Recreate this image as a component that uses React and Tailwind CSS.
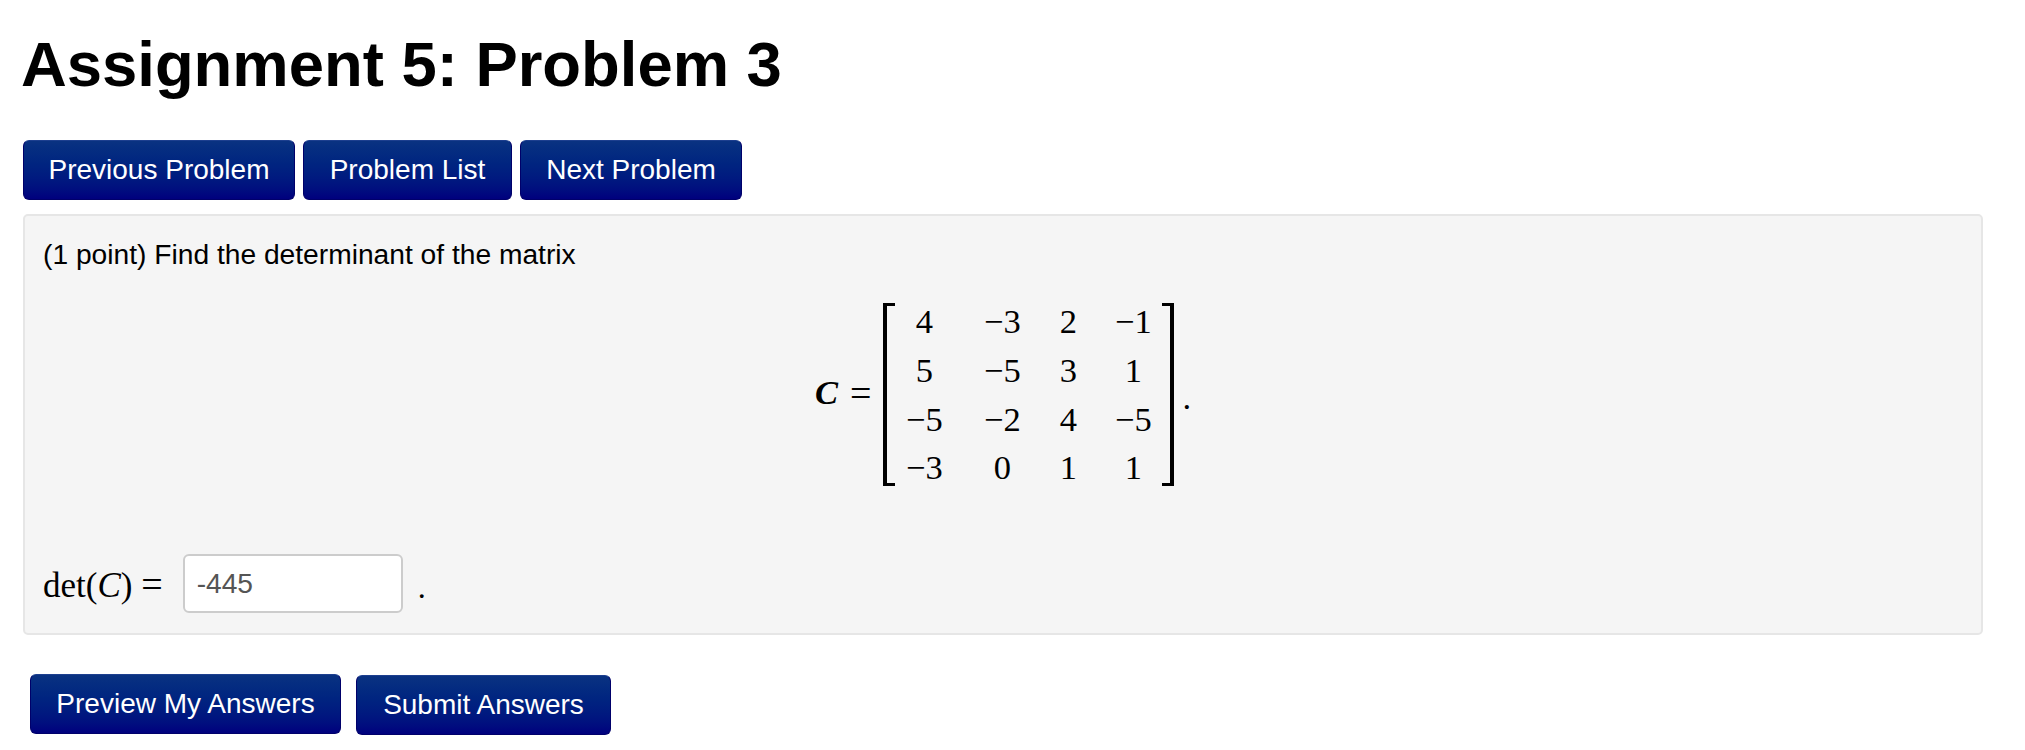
const rows = [
  ['4', '−3', '2', '−1'],
  ['5', '−5', '3', '1'],
  ['−5', '−2', '4', '−5'],
  ['−3', '0', '1', '1'],
];

const NavButton = ({ children, className = '' }) => (
  <button className={`h-[60px] rounded-[6px] border border-[#00006a] border-t-[#1d3f8f] bg-linear-to-b from-[#0a3281] to-[#00007e] text-[28px] leading-none text-white ${className}`}>
    {children}
  </button>
);

const Bracket = ({ side }) => (
  <div className={`h-[183px] w-[12px] border-y-[3px] border-black ${side === 'left' ? 'border-l-[4px]' : 'border-r-[4px]'}`} />
);

export default function App() {
  return (
    <div className="h-[750px] w-full overflow-hidden bg-white font-['Liberation_Sans',Arial,sans-serif] text-black">
      <div className="pl-[23px] pr-[33px] pt-[26px]">
        <h1 className="-ml-[2px] h-[88px] text-[63.4px] font-bold leading-[76px]">Assignment 5: Problem 3</h1>

        <div className="mt-[26px] flex gap-[8px]">
          <NavButton className="w-[272px]">Previous Problem</NavButton>
          <NavButton className="w-[209px]">Problem List</NavButton>
          <NavButton className="w-[222px]">Next Problem</NavButton>
        </div>

        <div className="mr-[9px] mt-[14px] h-[421px] rounded-[5px] border-2 border-[#e6e6e6] bg-[#f5f5f5] px-[18px] pt-[20px]">
          <p className="text-[28.2px] leading-[36px]">(1 point) Find the determinant of the matrix</p>

          <div className="mt-[25px] flex h-[195px] items-center justify-center pr-0 font-['Liberation_Serif','Times_New_Roman',serif] text-[34.5px]">
            <span className="mt-[-3px] font-bold italic">C</span>
            <span className="ml-[12px] mr-[12px] mt-[-4px] text-[38px] leading-none">=</span>
            <Bracket side="left" />
            <div className="grid grid-cols-[58px_60px_34px_58px] gap-x-[19px] leading-[48.7px]">
              {rows.map((row) =>
                row.map((cell, i) => (
                  <span key={`${row.join()}-${i}`} className="text-center">{cell}</span>
                ))
              )}
            </div>
            <Bracket side="right" />
            <span className="ml-[8px] mt-[6px]">.</span>
          </div>

          <div className="mt-[62px] flex items-center">
            <span className="font-['Liberation_Serif','Times_New_Roman',serif] text-[35px] leading-none">
              det(<span className="italic">C</span>) <span className="text-[38px] leading-none">=</span>
            </span>
            <input
              readOnly
              value="-445"
              className="ml-[20px] h-[59px] w-[220px] rounded-[6px] border-2 border-[#cccccc] bg-white px-[12px] text-[28.2px] text-[#555555] outline-none"
            />
            <span className="ml-[15px] mt-[6px] font-['Liberation_Serif','Times_New_Roman',serif] text-[32px] leading-none">.</span>
          </div>
        </div>

        <div className="ml-[7px] mt-[39px] flex items-start gap-[15px]">
          <NavButton className="w-[311px]">Preview My Answers</NavButton>
          <NavButton className="mt-px w-[255px]">Submit Answers</NavButton>
        </div>
      </div>
    </div>
  );
}
